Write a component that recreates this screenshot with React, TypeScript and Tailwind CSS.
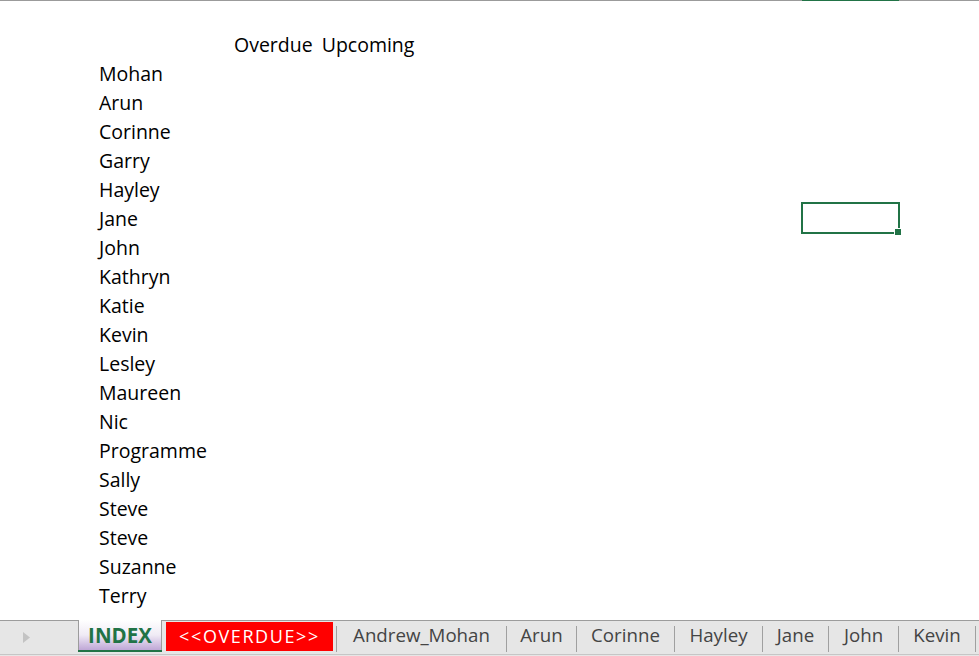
import React from "react";

const names = [
  "Mohan","Arun","Corinne","Garry","Hayley","Jane","John","Kathryn","Katie","Kevin",
  "Lesley","Maureen","Nic","Programme","Sally","Steve","Steve","Suzanne","Terry",
];

const tabs: { label: string; w: number }[] = [
  { label: "Andrew_Mohan", w: 170 },
  { label: "Arun", w: 70 },
  { label: "Corinne", w: 98 },
  { label: "Hayley", w: 88 },
  { label: "Jane", w: 66 },
  { label: "John", w: 70 },
  { label: "Kevin", w: 77 },
];

export default function App() {
  return (
    <div className="w-[979px] h-[656px] bg-white overflow-hidden flex flex-col" style={{ fontFamily: '"Open Sans", "Noto Sans", sans-serif' }}>
      {/* top edge */}
      <div className="flex h-px shrink-0">
        <div className="w-[802px] bg-[#9b9b9b]" />
        <div className="w-[97px] bg-[#217346]" />
        <div className="flex-1 bg-[#9b9b9b]" />
      </div>
      {/* sheet */}
      <div className="relative h-[619px] shrink-0 text-[19.5px] text-black leading-[29px]">
        <div className="pt-[29px] flex flex-col">
          <div className="h-[29px] flex">
            <div className="w-[234px]" />
            <span>Overdue</span>
            <span className="ml-[9px]">Upcoming</span>
          </div>
          {names.map((n, i) => (
            <div key={i} className="h-[29px] pl-[99px]">{n}</div>
          ))}
        </div>
        {/* selected cell */}
        <div className="absolute left-[801px] top-[201px] w-[99px] h-[32px] border-2 border-[#217346]" />
        <div className="absolute left-[895px] top-[228px] w-[6px] h-[6px] bg-[#217346] border border-white box-content -m-px" />
      </div>
      {/* tab bar */}
      <div className="relative flex-1 bg-[#e6e6e6] border-t border-[#9c9c9c] flex items-stretch">
        <div className="w-[78px] flex items-center pl-[23px] pb-[2px]">
          <svg width="7" height="11" viewBox="0 0 7 11"><path d="M0 0 L7 5.5 L0 11 Z" fill="#c3c3c3" /></svg>
        </div>
        <div className="relative -mt-px w-[84px] h-[30px] border-l border-r border-[#9c9c9c] bg-gradient-to-b from-white via-[#f0ebf5] to-[#bfa7d6] flex items-center justify-center">
          <span className="text-[20.5px] font-bold text-[#217346] leading-none">INDEX</span>
          <div className="absolute left-[-1px] right-[-1px] bottom-[-2px] h-[2px] bg-[#217346]" />
        </div>
        <div className="ml-[4px] mt-[1px] w-[167px] h-[29px] bg-[#ff0000] flex items-center justify-center text-white text-[18px] tracking-[1.6px] leading-none pb-[1px]">
          &lt;&lt;OVERDUE&gt;&gt;
        </div>
        <div className="ml-[3px] w-px h-[26px] mt-[5px] bg-[#a0a0a0]" />
        {tabs.map((t) => (
          <React.Fragment key={t.label}>
            <div className="flex items-center justify-center text-[18.7px] text-[#444444] leading-none pb-[6px]" style={{ width: t.w - 1 }}>
              {t.label}
            </div>
            <div className="w-px h-[26px] mt-[5px] bg-[#a0a0a0]" />
          </React.Fragment>
        ))}
        <div className="absolute left-0 right-0 bottom-[1px] h-px bg-[#c6c6c6]" />
      </div>
    </div>
  );
}
